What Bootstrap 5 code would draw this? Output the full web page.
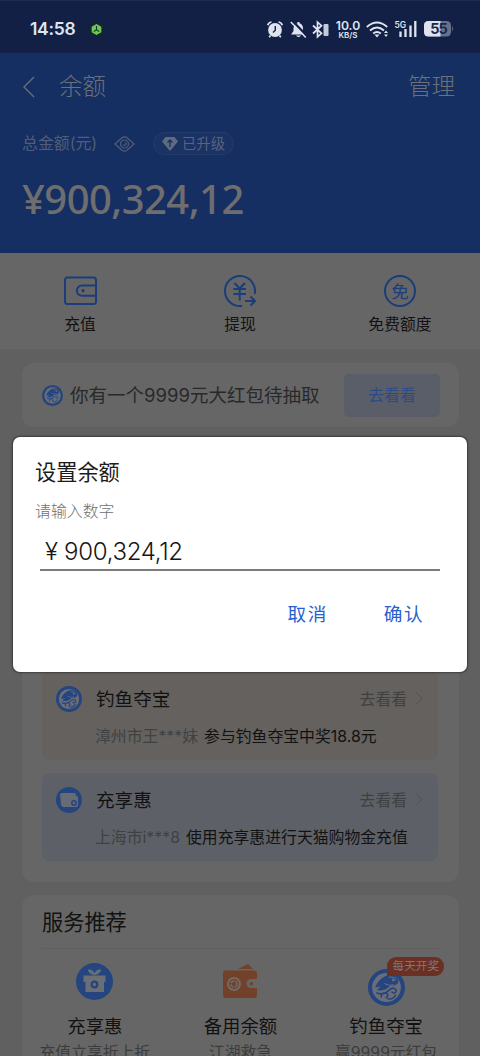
<!DOCTYPE html>
<html lang="zh-CN">

<head>
    <meta charset="utf-8">
    <meta name="viewport" content="width=device-width, initial-scale=1">
    <title>余额</title>
    <link rel="stylesheet" href="https://cdn.jsdelivr.net/npm/bootstrap@5.3.0/dist/css/bootstrap.min.css">
    <style>
        body {
            width: 480px;
            height: 1056px;
            overflow: hidden;
            background: #606060;
            color: #121212;
            font-family: Inter, "Noto Sans CJK SC", sans-serif;
            line-height: 1;
        }

        svg {
            display: block;
            flex: none;
            overflow: visible;
        }

        .status-bar {
            height: 53px;
            padding: 4px 26px 0 30px;
            background: #122045;
            border-top: 1px solid #1f2c50;
            color: #dfe3ef;
        }

        .clock {
            font-size: 17.5px;
            font-weight: 600;
            letter-spacing: -.3px;
        }

        .net-speed {
            font-size: 12.2px;
            font-weight: 600;
            line-height: 11px;
            width: 26px;
            text-align: center;
        }

        .net-speed span {
            display: block;
            font-size: 8px;
            line-height: 8px;
        }

        .account {
            height: 200px;
            padding: 19px 25px 0 22px;
            background: #162f62;
            color: #6c7078;
        }

        .top-title {
            font-size: 23.5px;
            font-weight: 300;
            line-height: 30px;
        }

        .sum-label {
            margin-top: 30px;
            font-size: 15.9px;
            line-height: 22px;
            color: #525e78;
        }

        .up-tag {
            height: 23px;
            width: 81px;
            margin-left: 18px;
            padding: 0 8px;
            border: 1px solid #253b69;
            background: #1b3265;
            border-radius: 12px;
            font-size: 14.3px;
            color: #59647c;
        }

        .big-sum {
            margin-top: 20px;
            font-family: "Noto Sans", sans-serif;
            font-size: 40px;
            font-weight: 500;
            line-height: 48px;
            letter-spacing: -.55px;
            color: #6e6e70;
        }

        .actions {
            height: 96px;
            padding-top: 21px;
            background: #666;
            font-size: 15.8px;
        }

        .action-name {
            margin-top: 9px;
        }

        .panel {
            margin: 0 21px 0 22px;
            border-radius: 12px;
            background: #666;
        }

        .promo {
            height: 64px;
            margin-top: 14px;
            padding: 0 19px 0 20px;
            font-size: 18.5px;
            color: #292929;
        }

        .look-btn {
            width: 96px;
            height: 43px;
            padding-top: 1px;
            border-radius: 5px;
            background: #5a5e69;
            color: #2c4b85;
            font-size: 15.8px;
        }

        .feeds {
            height: 441px;
            margin-top: 14px;
            padding: 0 21px 21px 20px;
        }

        .feed {
            height: 88px;
            padding: 12px 15px 0 14px;
            border-radius: 7px;
            background: #5e6067;
        }

        .feed-warm {
            background: #64615e;
        }

        .feed-name {
            margin-left: 14px;
            padding-top: 1px;
            font-size: 18.6px;
            line-height: 28px;
        }

        .feed-more {
            padding-top: 2px;
            margin-right: 8px;
            font-size: 15.8px;
            color: #404040;
        }

        .feed-line {
            padding: 12px 0 0 39px;
            font-size: 15.85px;
            line-height: 24px;
            white-space: nowrap;
        }

        .who {
            margin-right: 6px;
            color: #404143;
        }

        .services {
            height: 200px;
            margin-top: 13px;
        }

        .services-title {
            margin: 0 20px;
            height: 54px;
            border-bottom: 1px solid #606060;
            font-size: 21.2px;
            line-height: 54px;
        }

        .service {
            padding-top: 14px;
            font-size: 18.4px;
        }

        .service-name {
            margin-top: 17px;
        }

        .service-note {
            margin-top: 10px;
            font-size: 15.8px;
            color: #3c3c3c;
        }

        .daily {
            left: 74px;
            top: 8px;
            width: 57px;
            height: 19px;
            border-radius: 9px 9px 9px 0;
            background: #6b3024;
            color: #827774;
            font-size: 11.6px;
            line-height: 19px;
            text-align: center;
        }

        .dialog-box {
            left: 13px;
            top: 437px;
            width: 454px;
            height: 235px;
            padding: 20px 27px 0 22px;
            border-radius: 7px;
            background: #fff;
            box-shadow: 0 0 2px 1px rgba(0, 0, 0, .4);
        }

        .dialog-title {
            font-size: 21.2px;
            line-height: 31px;
            color: #1c1c1c;
        }

        .dialog-hint {
            margin-top: 13px;
            font-size: 15.9px;
            font-weight: 300;
            line-height: 22px;
            color: #707070;
        }

        .dialog-value {
            margin-left: 5px;
            height: 48px;
            padding: 14px 0 0 5px;
            border-bottom: 2px solid #7c7c7c;
            font-size: 24px;
            font-weight: 350;
            line-height: 30px;
            letter-spacing: -.3px;
            color: #161616;
        }

        .dialog-btns {
            margin-top: 28px;
            padding-right: 16px;
            gap: 56px;
            font-size: 18.6px;
            line-height: 30px;
            letter-spacing: 1.5px;
            color: #2860d0;
        }
    </style>
</head>

<body>
    <!-- shared icons -->
    <svg width="0" height="0" class="position-absolute">
        <symbol id="fish" viewBox="0 0 36 36">
            <circle cx="18" cy="18" r="18" fill="#24457f" />
            <circle cx="18" cy="18" r="14" fill="#6a6e76" />
            <path d="M7 18C9 12 14 7 20 6c6-1 10 3 9.500 7-1 3-5 3.500-8 3.500-4 4-9 5-13 4l4-3.500z" fill="#24457f" />
            <path d="M20 8q6-1 7 3M16 14q4 3 9 1" fill="none" stroke="#6a6e76" stroke-width="1" />
            <circle cx="24.500" cy="10.800" r="1.300" fill="#6a6e76" />
            <path d="M8 23q7 3 12-2 4-4 7-1c1.500 3-2.500 4.500-4 2M13 28c-1-3.500 2-5.500 4.500-4.500s2.500 4-.5 4.500M19 29q6 1 8-4" fill="none" stroke="#24457f" stroke-width="1.600" />
        </symbol>
    </svg>

    <!-- status bar -->
    <div class="status-bar d-flex align-items-center">
        <span class="clock me-3">14:58</span>
        <svg class="me-auto" width="11" height="13" viewBox="0 0 13 14">
            <rect x="-1.500" y="-1.500" width="16" height="17" rx="4" fill="#17232f" />
            <path d="M6.500 .5l5.700 3.200v6.600l-5.700 3.200-5.700-3.200V3.700z" fill="#6bc85a" />
            <path d="M6.500 3v4.300L3.200 9.500M6.500 7.300l3.300 2.200" stroke="#17351f" stroke-width="1.300" fill="none" />
        </svg>
        <div class="d-flex align-items-center">
            <svg width="16" height="17" viewBox="0 0 16 17">
                <circle cx="8" cy="9" r="6.900" fill="#dfe3ef" />
                <path d="M.8 4.200Q1.500 1.500 4.500 1M15.200 4.200Q14.500 1.500 11.500 1M3.500 14.500l-1.300 1.800M12.500 14.500l1.300 1.800" stroke="#dfe3ef" stroke-width="1.700" fill="none" />
                <path d="M8.300 5v4.300L6 11.500" stroke="#122045" stroke-width="1.400" fill="none" />
            </svg>
            <svg width="17" height="17" viewBox="0 0 17 17" style="margin-left:7px">
                <path d="M1 13.500L3.500 10V7C4 4 6 2.500 7.500 2.200V1h2v1.200C12 3 13 5 13 7v3l2.500 3.500zM6 14.500h5q-2.500 3-5 0" fill="#dfe3ef" />
                <path d="M2 -.5l15.500 16" stroke="#122045" stroke-width="2.500" />
                <path d="M.8 1l15 15.500" stroke="#dfe3ef" stroke-width="1.600" />
            </svg>
            <svg width="17" height="17" viewBox="0 0 17 17" style="margin-left:5px">
                <path d="M1 4.500l8.500 7.800-4 3.500V1.200l4 3.500L1 12.500" stroke="#dfe3ef" stroke-width="1.700" fill="none" />
                <rect x="11.500" y="3" width="5" height="12" rx="1" fill="#c5cad9" />
            </svg>
            <div class="net-speed" style="margin-left:6px">10.0<span>KB/S</span></div>
            <svg width="23" height="17" viewBox="0 0 23 17" style="margin-left:5px">
                <path d="M.8 6Q11 -3 21.200 6M4 9.500q7-6 14 0M7.200 12.500q3.800-3 7.600 0" stroke="#dfe3ef" stroke-width="2" fill="none" />
                <path d="M8.500 13.500h5L11 16.500zM18 12l2-2.500 2 2.500zM18 13.500l2 2.500 2-2.500z" fill="#dfe3ef" />
            </svg>
            <svg width="22" height="18" viewBox="0 0 22 18" style="margin-left:6px">
                <text x="-.500" y="7.500" font-size="8.500" font-weight="600" fill="#dfe3ef">5G</text>
                <path d="M5.500 17v-5.500M10.500 17V9M15.500 17V5.500M20.300 17V1" stroke="#dfe3ef" stroke-width="2.300" />
            </svg>
            <svg width="30" height="16" viewBox="0 0 30 16" style="margin-left:7px">
                <rect width="27" height="15.500" rx="4.500" fill="#68718a" />
                <path d="M16.500 0h-12Q0 0 0 4.500V11q0 4.500 4.500 4.500h12z" fill="#dfe3ef" />
                <path d="M28 5q2 2.700 0 5.500z" fill="#68718a" />
                <text x="14.500" y="13" font-size="14.500" font-weight="700" text-anchor="middle" letter-spacing="-1" fill="#1a284b">55</text>
            </svg>
        </div>
    </div>

    <!-- balance header -->
    <div class="account">
        <div class="d-flex align-items-center top-title">
            <svg width="13" height="22" viewBox="0 0 13 22"><path d="M12 1L2 11l10 10" fill="none" stroke="#6c7078" stroke-width="1.300" /></svg>
            <span class="ms-4">余额</span>
            <span class="ms-auto">管理</span>
        </div>
        <div class="d-flex align-items-center sum-label">
            <span style="width:92px">总金额(元)</span>
            <svg width="21" height="18" viewBox="0 0 21 18" fill="none" stroke="#525e78" stroke-width="1.200">
                <path d="M1 9l7-6.200q2.500-2 5 0L20 9l-7 6.200q-2.500 2-5 0z" />
                <circle cx="10.500" cy="9" r="4" />
                <path d="M9.200 9.500a1.500 1.500 0 1 0 1.800-2" />
            </svg>
            <div class="up-tag d-flex align-items-center justify-content-between">
                <svg width="16" height="14" viewBox="0 0 16 14">
                    <path d="M3.500 0h9L16 4.500 8 14 0 4.500z" fill="#606b80" />
                    <path d="M8 10V4M5.500 5.500L8 3l2.500 2.500" stroke="#1b3265" stroke-width="1.400" fill="none" />
                </svg>
                <span>已升级</span>
            </div>
        </div>
        <div class="big-sum">¥900,324,12</div>
    </div>

    <div class="actions row g-0 text-center">
        <div class="col-4">
            <svg class="mx-auto" width="34" height="34" viewBox="0 0 34 34" fill="none" stroke="#1b3d7b" stroke-width="2">
                <rect x="2" y="3.500" width="31" height="26.500" rx="2.500" />
                <path d="M33 11.500H19a5 5 0 0 0 0 10.300h14" />
                <circle cx="20" cy="16.700" r="1.600" fill="#1b3d7b" stroke="none" />
            </svg>
            <div class="action-name">充值</div>
        </div>
        <div class="col-4">
            <svg class="mx-auto" width="34" height="34" viewBox="0 0 34 34" fill="none" stroke="#1b3d7b" stroke-width="2">
                <path d="M31.700 20A15 15 0 1 0 19 31.900" />
                <path d="M11.500 9l5.200 5.500L22 9M10.500 15h12.500M10.500 20h12.500M16.700 14.500V26.500M22 27h9.500M27.500 22.500l4.500 4.500-4.500 4.500" />
            </svg>
            <div class="action-name">提现</div>
        </div>
        <div class="col-4">
            <svg class="mx-auto" width="34" height="34" viewBox="0 0 34 34">
                <circle cx="17" cy="17" r="15" fill="none" stroke="#1b3d7b" stroke-width="2" />
                <text x="17" y="23.500" font-size="17.500" text-anchor="middle" fill="#1b3d7b">免</text>
            </svg>
            <div class="action-name">免费额度</div>
        </div>
    </div>

    <div class="panel promo d-flex align-items-center">
        <svg width="21" height="21"><use href="#fish" /></svg>
        <span style="margin-left:7px;padding-top:1px">你有一个9999元大红包待抽取</span>
        <div class="look-btn ms-auto d-flex align-items-center justify-content-center">去看看</div>
    </div>

    <div class="panel feeds d-flex flex-column justify-content-end">
        <div class="feed feed-warm">
            <div class="d-flex align-items-center">
                <svg width="26" height="26"><use href="#fish" /></svg>
                <span class="feed-name">钓鱼夺宝</span>
                <span class="feed-more ms-auto">去看看</span>
                <svg width="8" height="15" viewBox="0 0 9 16"><path d="M1 1l7 7-7 7" fill="none" stroke="#505050" /></svg>
            </div>
            <div class="feed-line"><span class="who">漳州市王***妹</span>参与钓鱼夺宝中奖18.8元</div>
        </div>
        <div class="feed" style="margin-top:13px">
            <div class="d-flex align-items-center">
                <svg width="26" height="26" viewBox="0 0 26 26">
                    <circle cx="13" cy="13" r="13" fill="#24457f" />
                    <path d="M6 6h12q2 0 2 2v1h1q1 0 1 2v7q0 2-2 2H8q-3 0-3-3L4 8q0-2 2-2z" fill="#666b74" />
                    <circle cx="18" cy="16" r="2.200" fill="#666b74" stroke="#24457f" stroke-width="1.500" />
                </svg>
                <span class="feed-name">充享惠</span>
                <span class="feed-more ms-auto">去看看</span>
                <svg width="8" height="15" viewBox="0 0 9 16"><path d="M1 1l7 7-7 7" fill="none" stroke="#505050" /></svg>
            </div>
            <div class="feed-line"><span class="who">上海市i***8</span>使用充享惠进行天猫购物金充值</div>
        </div>
    </div>

    <div class="panel services">
        <div class="services-title">服务推荐</div>
        <div class="row g-0 text-center">
            <div class="col-4 service">
                <svg class="mx-auto" width="37" height="37" viewBox="0 0 37 37">
                    <circle cx="18.500" cy="18.500" r="18.500" fill="#24457f" />
                    <path d="M7.500 12.500h22v6.500h-1.500v10H9.500V19h-2zM18 12C16 12 11.500 9 12 6.500c3-.5 6 1.500 6.500 4 .5-2.500 3.500-4.500 6.500-4 .5 2.500-4 5.500-6 5.500z" fill="#6b6e74" />
                    <circle cx="18.500" cy="21.500" r="2.800" fill="#6b6e74" stroke="#24457f" stroke-width="2.200" />
                </svg>
                <div class="service-name">充享惠</div>
                <div class="service-note">充值立享折上折</div>
            </div>
            <div class="col-4 service">
                <svg class="mx-auto" width="37" height="37" viewBox="0 0 37 37">
                    <path d="M16 6l10-5 5 5zM3 7.500h29q3 0 3 3V16h-6a4.500 4.500 0 0 0 0 9h6v7q0 3-3 3H4q-3 0-3-3V10q0-2.500 2-2.500z" fill="#73402a" />
                    <circle cx="12" cy="21" r="6" fill="#73402a" stroke="#706b68" stroke-width="2" />
                    <circle cx="12" cy="21" r="3" fill="none" stroke="#706b68" stroke-width="1.500" stroke-dasharray="4 1" />
                    <circle cx="29.500" cy="20.700" r="1.700" fill="#73402a" />
                </svg>
                <div class="service-name">备用余额</div>
                <div class="service-note">江湖救急</div>
            </div>
            <div class="col-4 service position-relative">
                <svg class="mx-auto mt-1" width="37" height="37" viewBox="0 -2 37 37"><use href="#fish" width="37" height="37" /></svg>
                <span class="daily position-absolute">每天开奖</span>
                <div class="service-name" style="margin-top:13px">钓鱼夺宝</div>
                <div class="service-note">赢9999元红包</div>
            </div>
        </div>
    </div>

    <!-- balance dialog -->
    <div class="dialog-box position-absolute">
        <div class="dialog-title">设置余额</div>
        <div class="dialog-hint">请输入数字</div>
        <div class="dialog-value">¥ 900,324,12</div>
        <div class="dialog-btns d-flex justify-content-end">
            <span>取消</span>
            <span>确认</span>
        </div>
    </div>

    <script src="https://cdn.jsdelivr.net/npm/bootstrap@5.3.0/dist/js/bootstrap.bundle.min.js"></script>
</body>

</html>
